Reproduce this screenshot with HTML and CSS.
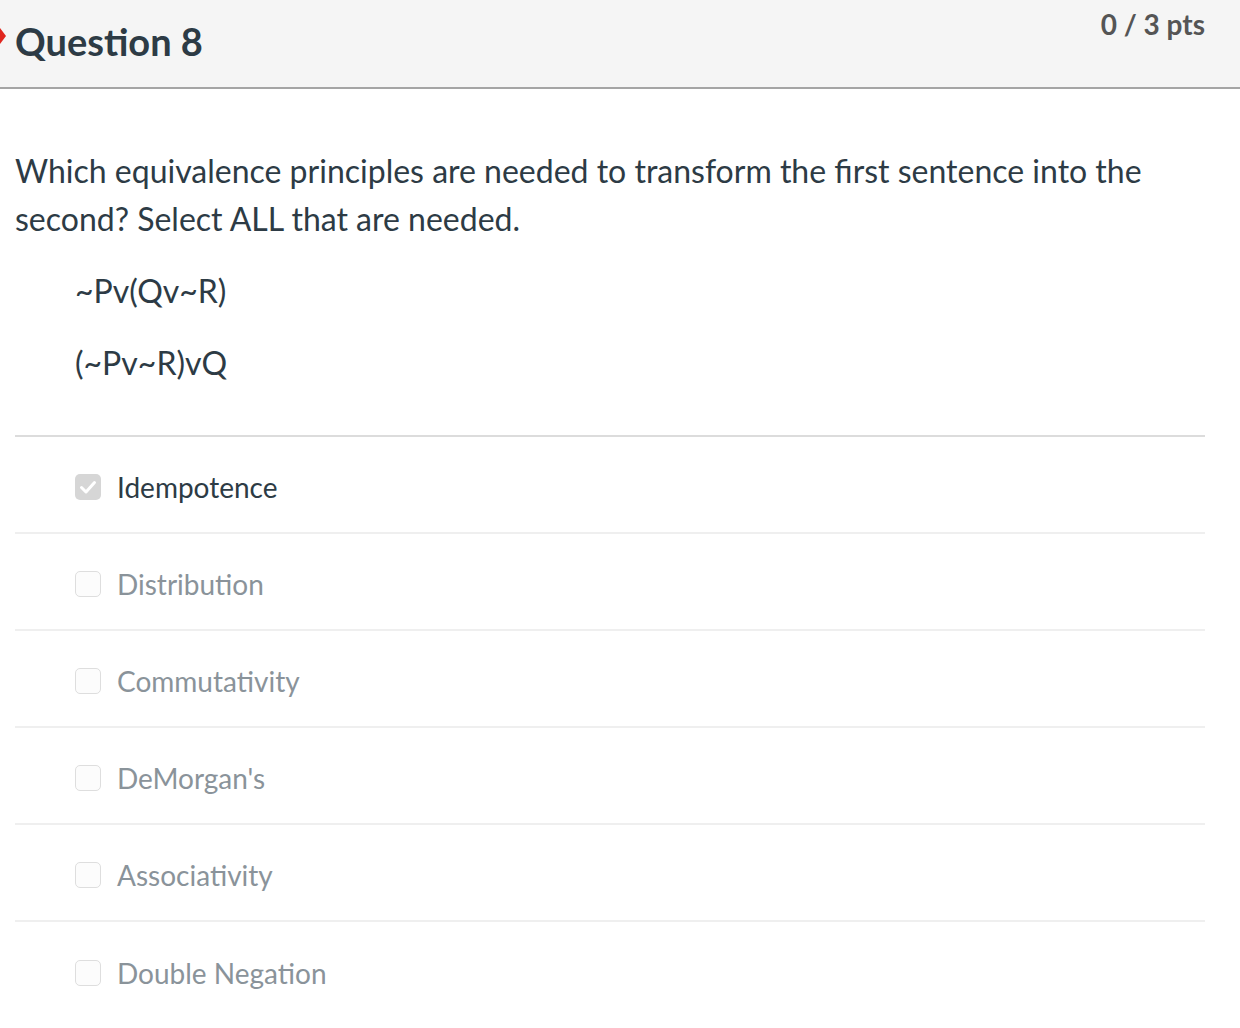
FILE: index.html
```html
<!DOCTYPE html>
<html>
<head>
<meta charset="utf-8">
<link rel="stylesheet" href="styles.css">
</head>
<body>
<div class="question">
  <div class="header">
    <span class="marker"></span>
    <h2 class="title">Question 8</h2>
    <div class="pts">0 / 3 pts</div>
  </div>
  <div class="body">
    <p class="prompt">Which equivalence principles are needed to transform the first sentence into the second? Select ALL that are needed.</p>
    <p class="formula">~Pv(Qv~R)</p>
    <p class="formula">(~Pv~R)vQ</p>
    <div class="answers">
      <div class="answer selected"><span class="box checked"><svg viewBox="0 0 26 26" width="26" height="26"><path d="M6.5 13.5 L11 18 L19.5 8.5" fill="none" stroke="#fff" stroke-width="3" stroke-linecap="round" stroke-linejoin="round"/></svg></span><span class="label">Idempotence</span></div>
      <div class="answer"><span class="box"></span><span class="label">Distribution</span></div>
      <div class="answer"><span class="box"></span><span class="label">Commutativity</span></div>
      <div class="answer"><span class="box"></span><span class="label">DeMorgan's</span></div>
      <div class="answer"><span class="box"></span><span class="label">Associativity</span></div>
      <div class="answer"><span class="box"></span><span class="label">Double Negation</span></div>
    </div>
  </div>
</div>
</body>
</html>
```
FILE: styles.css
```css
html, body {
  margin: 0;
  padding: 0;
  background: #fff;
}
body {
  font-family: Lato, "Open Sans", sans-serif;
  color: #2d3b45;
}
.question {
  width: 1240px;
}
.header {
  position: relative;
  height: 87px;
  background: #f5f5f5;
  border-bottom: 2px solid #a5a5a5;
  display: flex;
  justify-content: space-between;
  align-items: flex-start;
  padding: 0 35px 0 15px;
}
.marker {
  position: absolute;
  left: 0;
  top: 28px;
  width: 0;
  height: 0;
  border-top: 8px solid transparent;
  border-bottom: 8px solid transparent;
  border-left: 6px solid #e0261e;
}
.title {
  margin: 0;
  padding-top: 19px;
  font-size: 38px;
  font-weight: 700;
  line-height: 44px;
  color: #2d3b45;
}
.pts {
  padding-top: 6px;
  font-size: 28px;
  font-weight: 700;
  line-height: 36px;
  color: #555;
}
.body {
  padding: 0 35px 0 15px;
}
.prompt {
  margin: 0;
  padding-top: 58px;
  font-size: 32px;
  line-height: 48px;
}
.formula {
  margin: 0;
  padding-left: 60px;
  font-size: 32px;
  line-height: 48px;
}
.prompt + .formula {
  margin-top: 24px;
}
.formula + .formula {
  margin-top: 24px;
}
.answers {
  margin-top: 48px;
  border-top: 2px solid #dcdcdc;
}
.answer {
  height: 97px;
  box-sizing: border-box;
  padding-top: 4px;
  display: flex;
  align-items: center;
  padding-left: 60px;
  border-bottom: 2px solid #efefef;
  gap: 16px;
}
.answer:last-child {
  border-bottom: none;
}
.box {
  width: 24px;
  height: 24px;
  border: 1px solid #dedede;
  border-radius: 5px;
  background: #fcfcfc;
  display: flex;
  align-items: center;
  justify-content: center;
}
.box.checked {
  width: 26px;
  height: 26px;
  border: none;
  background: #d6d6d6;
}
.label {
  font-size: 28px;
  color: #8a939a;
}
.selected .label {
  color: #2d3b45;
}
```
